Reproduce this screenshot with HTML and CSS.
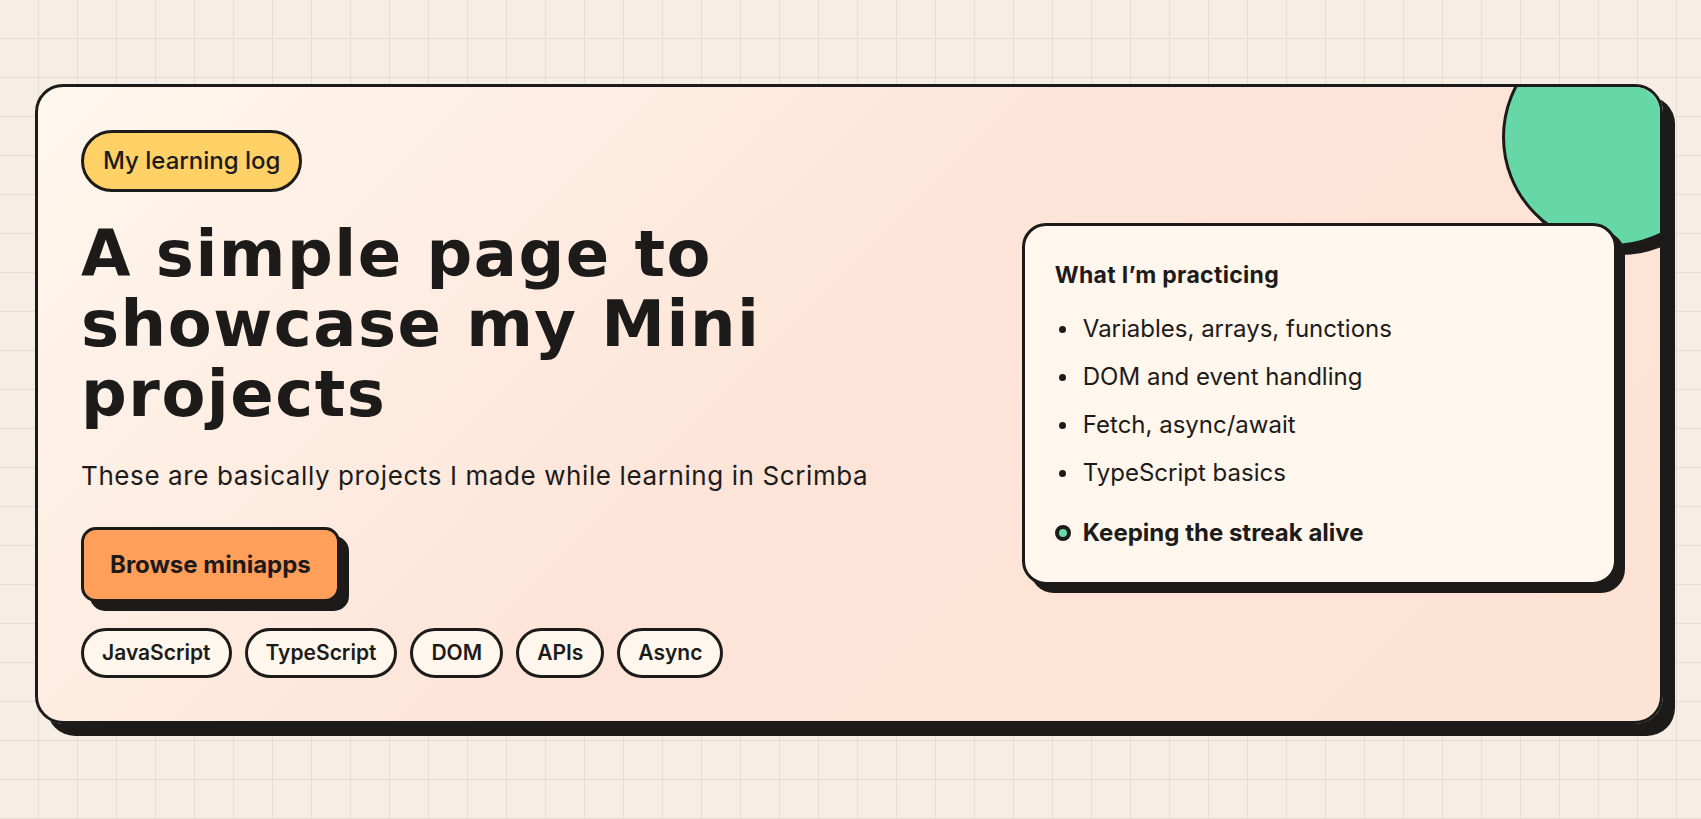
FILE: index.html
```html
<!DOCTYPE html>
<html lang="en">
<head>
  <meta charset="UTF-8">
  <meta name="viewport" content="width=device-width, initial-scale=1.0">
  <title>My learning log</title>
  <link rel="stylesheet" href="styles.css">
</head>
<body>
  <main class="page">
    <section class="hero">
      <div class="hero-blob"></div>

      <div class="hero-text">
        <span class="badge">My learning log</span>
        <h1 class="hero-title">A simple page to showcase my Mini projects</h1>
        <p class="hero-sub">These are basically projects I made while learning in Scrimba</p>
        <a class="btn" href="#apps">Browse miniapps</a>
        <ul class="tags">
          <li>JavaScript</li>
          <li>TypeScript</li>
          <li>DOM</li>
          <li>APIs</li>
          <li>Async</li>
        </ul>
      </div>

      <aside class="practice-card">
        <h2>What I’m practicing</h2>
        <ul class="practice-list">
          <li>Variables, arrays, functions</li>
          <li>DOM and event handling</li>
          <li>Fetch, async/await</li>
          <li>TypeScript basics</li>
        </ul>
        <p class="streak"><span class="streak-dot"></span>Keeping the streak alive</p>
      </aside>
    </section>
  </main>
</body>
</html>
```

FILE: styles.css
```css
body {
  margin: 0;
  min-height: 100vh;
  font-family: Inter, "Noto Sans", sans-serif;
  color: #1c1b1a;
  background-color: #f6eee4;
  background-image:
    linear-gradient(to right, #e7ddd2 1px, transparent 1px),
    linear-gradient(to bottom, #e7ddd2 1px, transparent 1px);
  background-size: 39px 39px;
  background-position: -1px -1px;
}
.page {
  padding: 84px 38px 40px 35px;
}
.hero {
  position: relative;
  overflow: hidden;
  display: grid;
  grid-template-columns: 1.5fr 1fr;
  gap: 48px;
  align-items: center;
  padding: 43px;
  border: 3px solid #1c1b1a;
  border-radius: 28px;
  box-shadow: 12px 12px 0 #1c1b1a;
  background: linear-gradient(135deg, #fff7ee 0%, #fde4d8 48%, #fde3d4 100%);
}
.hero-blob {
  position: absolute;
  top: -60px;
  right: -62px;
  width: 220px;
  height: 220px;
  box-sizing: border-box;
  border: 3px solid #1c1b1a;
  border-radius: 50%;
  background: #66d8a8;
  box-shadow: 8px 8px 0 #1c1b1a;
}
.hero-text {
  position: relative;
}
.badge {
  display: inline-block;
  padding: 14px 19px;
  line-height: 28px;
  font-size: 24px;
  font-weight: 500;
  background: #ffd166;
  border: 3px solid #1c1b1a;
  border-radius: 999px;
}
.hero-title {
  max-width: 780px;
  margin: 27px 0 0;
  font-family: "DejaVu Sans", sans-serif;
  font-size: 64px;
  line-height: 70px;
  font-weight: 700;
  letter-spacing: 1.5px;
}
.hero-sub {
  margin: 29px 0 0;
  font-size: 26px;
  line-height: 35px;
  letter-spacing: 0.6px;
}
.btn {
  display: inline-block;
  margin-top: 34px;
  padding: 20px 26px;
  line-height: 29px;
  font-size: 24px;
  font-weight: 700;
  color: #1c1b1a;
  text-decoration: none;
  background: #ff9f5a;
  border: 3px solid #1c1b1a;
  border-radius: 15px;
  box-shadow: 9px 9px 0 #1c1b1a;
}
.tags {
  display: flex;
  gap: 13px;
  margin: 26px 0 0;
  padding: 0;
  list-style: none;
}
.tags li {
  padding: 11px 18px;
  line-height: 22px;
  font-size: 21px;
  font-weight: 600;
  background: #fff7ee;
  border: 3px solid #1c1b1a;
  border-radius: 999px;
}
.practice-card {
  position: relative;
  z-index: 1;
  padding: 34px 30px 31px;
  background: #fff6ed;
  border: 3px solid #1c1b1a;
  border-radius: 24px;
  box-shadow: 8px 8px 0 #1c1b1a;
}
.practice-card h2 {
  margin: 0 0 21px;
  font-size: 23px;
  line-height: 30px;
  font-weight: 700;
  letter-spacing: 0.3px;
}
.practice-list {
  margin: 0;
  padding: 0;
  list-style: none;
}
.practice-list li {
  position: relative;
  padding-left: 28px;
  margin-bottom: 12px;
  font-size: 24px;
  line-height: 36px;
}
.practice-list li::before {
  content: "";
  position: absolute;
  left: 4px;
  top: 15px;
  width: 7px;
  height: 7px;
  border-radius: 50%;
  background: #1c1b1a;
}
.streak {
  display: flex;
  align-items: center;
  gap: 12px;
  margin: 24px 0 0;
  font-size: 24px;
  line-height: 36px;
  font-weight: 700;
}
.streak-dot {
  width: 16px;
  height: 16px;
  box-sizing: border-box;
  border: 4px solid #1c1b1a;
  border-radius: 50%;
  background: #66d8a8;
}
```
